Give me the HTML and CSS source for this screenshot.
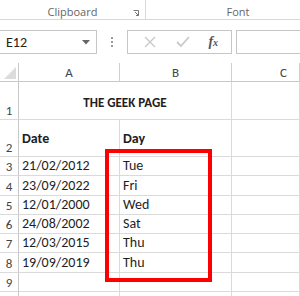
FILE: index.html
```html
<!DOCTYPE html>
<html>
<head>
    <title>THE GEEK PAGE</title>
    <link rel="stylesheet" href="styles.css">
</head>
<body>
    <div class="ribbon">
        <div class="group clip">Clipboard
            <svg class="launcher" width="6" height="6" viewBox="0 0 6 6"><path d="M0.5 0.5h5v5M2 2l3.5 3.5M3 5.5h2.5V3" fill="none" stroke="#777" stroke-width="1"/></svg>
        </div>
        <div class="group font">Font</div>
    </div>

    <div class="formula-bar">
        <div class="name-box">
            <span>E12</span>
            <svg width="8" height="5" viewBox="0 0 8 5"><path d="M0 0h8L4 4.5z" fill="#666"/></svg>
        </div>
        <div class="dots"><i></i><i></i><i></i></div>
        <div class="fx-buttons">
            <svg width="14" height="14" viewBox="0 0 14 14"><path d="M2 2l10 10M12 2L2 12" stroke="#c9c9c9" stroke-width="1.4"/></svg>
            <svg width="16" height="14" viewBox="0 0 16 14"><path d="M2 7l4 4 8-9" fill="none" stroke="#c9c9c9" stroke-width="1.8"/></svg>
            <span class="fx">f<sub>x</sub></span>
        </div>
        <div class="formula-input"></div>
    </div>

    <div class="sheet">
        <div class="corner"><svg width="12" height="12" viewBox="0 0 12 12"><path d="M12 0v12H0z" fill="#dcdcdc"/></svg></div>
        <div class="col-head">A</div>
        <div class="col-head">B</div>
        <div class="col-head col-c">C</div>

        <div class="row-head r1">1</div>
        <div class="cell title r1">THE GEEK PAGE</div>
        <div class="cell r1"></div>

        <div class="row-head r2">2</div>
        <div class="cell head r2">Date</div>
        <div class="cell head r2">Day</div>
        <div class="cell r2"></div>

        <div class="row-head">3</div><div class="cell">21/02/2012</div><div class="cell">Tue</div><div class="cell"></div>
        <div class="row-head">4</div><div class="cell">23/09/2022</div><div class="cell">Fri</div><div class="cell"></div>
        <div class="row-head">5</div><div class="cell">12/01/2000</div><div class="cell">Wed</div><div class="cell"></div>
        <div class="row-head">6</div><div class="cell">24/08/2002</div><div class="cell">Sat</div><div class="cell"></div>
        <div class="row-head">7</div><div class="cell">12/03/2015</div><div class="cell">Thu</div><div class="cell"></div>
        <div class="row-head">8</div><div class="cell">19/09/2019</div><div class="cell">Thu</div><div class="cell"></div>
        <div class="row-head">9</div><div class="cell"></div><div class="cell"></div><div class="cell"></div>
        <div class="row-head"></div><div class="cell"></div><div class="cell"></div><div class="cell"></div>

        <div class="highlight"></div>
    </div>
</body>
</html>
```

FILE: styles.css
```css
body {
    margin: 0;
    width: 300px;
    height: 296px;
    overflow: hidden;
    background: #fff;
    font-family: Calibri, Carlito, Lato, sans-serif;
    color: #222;
}

/* ribbon group labels */
.ribbon {
    display: flex;
    height: 19px;
    border-bottom: 1px solid #d8d8d8;
    font-family: "Segoe UI", "Open Sans", sans-serif;
    font-size: 11px;
    color: #666;
}

.group {
    position: relative;
    display: flex;
    justify-content: center;
    align-items: center;
    padding-top: 3px;
}

.clip {
    width: 145px;
    border-right: 1px solid #d8d8d8;
}

.launcher {
    position: absolute;
    right: 6px;
    top: 10px;
}

.font {
    flex: 1;
    padding-left: 30px;
}

/* name box + formula bar */
.formula-bar {
    display: flex;
    align-items: center;
    height: 43px;
    padding-top: 1px;
    box-sizing: border-box;
}

.name-box {
    box-sizing: border-box;
    width: 97px;
    height: 24px;
    border: 1px solid #c6c6c6;
    border-left: none;
    display: flex;
    align-items: center;
    justify-content: space-between;
    padding: 0 6px 0 6px;
    font-size: 14px;
    color: #222;
}

.dots {
    width: 30px;
    display: flex;
    flex-direction: column;
    align-items: center;
    gap: 2px;
}

.dots i {
    width: 2px;
    height: 2px;
    background: #9a9a9a;
}

.fx-buttons {
    box-sizing: border-box;
    width: 105px;
    height: 24px;
    border: 1px solid #c6c6c6;
    display: flex;
    align-items: center;
    justify-content: space-around;
    padding: 0 4px 0 6px;
}

.fx {
    font-family: "Liberation Serif", serif;
    font-style: italic;
    font-weight: bold;
    font-size: 14px;
    color: #555;
}

.fx sub {
    font-size: 10px;
    vertical-align: 0;
}

.formula-input {
    box-sizing: border-box;
    margin-left: 4px;
    flex: 1;
    height: 24px;
    border: 1px solid #c6c6c6;
    border-right: none;
}

/* spreadsheet grid */
.sheet {
    position: relative;
    display: grid;
    grid-template-columns: 19px 101px 112px 68px;
    grid-template-rows: 19px 38px 37px 19px 20px 19px 19px 19px 20px 19px 19px 4px;
    height: 233px;
    overflow: hidden;
}

.corner,
.col-head,
.row-head,
.cell {
    box-sizing: border-box;
    border-right: 1px solid #dadada;
    border-bottom: 1px solid #dadada;
}

.corner {
    display: flex;
    align-items: flex-end;
    justify-content: flex-end;
    padding: 0 2px 2px 0;
    border-color: #c8c8c8;
}

.col-head {
    display: flex;
    align-items: center;
    justify-content: center;
    font-size: 13px;
    color: #444;
    border-bottom-color: #c8c8c8;
    border-right-color: #d0d0d0;
}

.col-c {
    padding-left: 36px;
}

.row-head {
    display: flex;
    align-items: flex-end;
    justify-content: center;
    font-size: 13px;
    color: #444;
    padding-bottom: 1px;
    border-right-color: #c8c8c8;
}

.cell {
    display: flex;
    align-items: flex-end;
    padding: 0 0 1px 3px;
    font-size: 14px;
    color: #1e1e1e;
    white-space: nowrap;
}

.title {
    grid-column: span 2;
    justify-content: center;
    align-items: center;
    font-weight: bold;
    font-size: 13px;
    padding: 4px 0 0 0;
}

.head {
    align-items: center;
    font-weight: bold;
    font-size: 14px;
    padding-top: 2px;
}

/* red annotation box over column B */
.highlight {
    position: absolute;
    left: 105px;
    top: 86px;
    width: 107px;
    height: 133px;
    box-sizing: border-box;
    border: 4px solid #f00;
}
```
